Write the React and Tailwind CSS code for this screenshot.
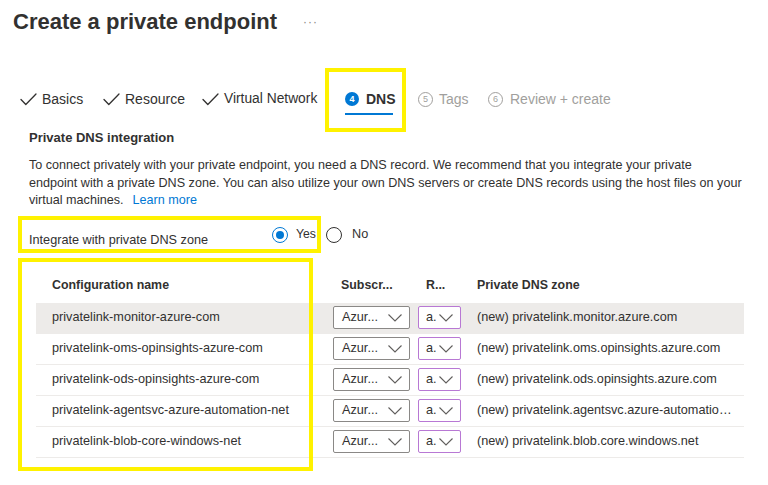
import React from "react";

const Check = () => (
  <svg width="17" height="13" viewBox="0 0 17 13" fill="none">
    <path d="M1 6.5 L5.8 11.5 L16 1" stroke="#323130" strokeWidth="1.3" strokeLinecap="round" strokeLinejoin="round" />
  </svg>
);

const Chevron = () => (
  <svg width="14" height="8" viewBox="0 0 14 8" fill="none">
    <path d="M0.5 0.5 L7 7 L13.5 0.5" stroke="#605e5c" strokeWidth="1.1" />
  </svg>
);

const rows = [
  ["privatelink-monitor-azure-com", "(new) privatelink.monitor.azure.com"],
  ["privatelink-oms-opinsights-azure-com", "(new) privatelink.oms.opinsights.azure.com"],
  ["privatelink-ods-opinsights-azure-com", "(new) privatelink.ods.opinsights.azure.com"],
  ["privatelink-agentsvc-azure-automation-net", "(new) privatelink.agentsvc.azure-automation.net"],
  ["privatelink-blob-core-windows-net", "(new) privatelink.blob.core.windows.net"],
];

export default function App() {
  return (
    <div className="relative w-[768px] h-[485px] bg-white overflow-hidden text-[#323130] font-['Liberation_Sans',Arial,sans-serif]">
      {/* Title */}
      <div className="flex items-center pl-[13px] pt-[7px] h-[37px]">
        <h1 className="text-[22px] font-semibold leading-[30px] text-[#323130]">Create a private endpoint</h1>
        <span className="ml-[26px] text-[12px] leading-none text-[#8a8886] tracking-[1px]">···</span>
      </div>

      {/* Tabs */}
      <div className="flex items-start mt-[52px] pl-[20px] text-[14px] leading-[20px]">
        <div className="w-[83px] flex items-center gap-[5px] h-[20px]">
          <Check />
          <span>Basics</span>
        </div>
        <div className="w-[99px] flex items-center gap-[5px] h-[20px]">
          <Check />
          <span>Resource</span>
        </div>
        <div className="w-[143px] flex items-center gap-[5px] h-[20px]">
          <Check />
          <span className="text-[13.8px]">Virtual Network</span>
        </div>
        <div className="w-[73px] flex flex-col">
          <div className="flex items-center gap-[7px] h-[20px]">
            <span className="w-[14px] h-[14px] rounded-full bg-[#0078d4] text-white text-[9px] font-bold flex items-center justify-center leading-none">4</span>
            <span className="font-semibold text-[14px]">DNS</span>
          </div>
          <div className="mt-[4px] h-[2px] w-[48px] bg-[#0078d4]" />
        </div>
        <div className="w-[70px] flex items-center gap-[6px] h-[20px] text-[#a19f9d]">
          <span className="w-[15px] h-[15px] rounded-full border border-[#a19f9d] text-[9px] flex items-center justify-center leading-none">5</span>
          <span>Tags</span>
        </div>
        <div className="flex items-center gap-[7px] h-[20px] text-[#a19f9d]">
          <span className="w-[15px] h-[15px] rounded-full border border-[#a19f9d] text-[9px] flex items-center justify-center leading-none">6</span>
          <span>Review + create</span>
        </div>
      </div>

      {/* Section heading */}
      <div className="pl-[29px] mt-[14px] text-[13px] font-semibold leading-[18px]">Private DNS integration</div>

      <p className="pl-[29px] mt-[10px] text-[12.6px] leading-[17.5px] text-[#323130]">
        To connect privately with your private endpoint, you need a DNS record. We recommend that you integrate your private
        <br />
        endpoint with a private DNS zone. You can also utilize your own DNS servers or create DNS records using the host files on your
        <br />
        virtual machines.
        <span className="ml-[9px] text-[#0078d4]">Learn more</span>
      </p>

      {/* Integrate row */}
      <div className="flex items-start mt-[15px] text-[12.7px]">
        <div className="w-[272px] pl-[29px] pt-[5px] leading-[20px]">Integrate with private DNS zone</div>
        <div className="flex items-center h-[20px]">
          <span className="w-[16px] h-[16px] rounded-full border border-[#0078d4] flex items-center justify-center">
            <span className="w-[8px] h-[8px] rounded-full bg-[#0078d4]" />
          </span>
          <span className="ml-[8px] w-[21px] text-[12.2px]">Yes</span>
          <span className="ml-[9px] w-[16px] h-[16px] rounded-full border border-[#323130]" />
          <span className="ml-[10px]">No</span>
        </div>
      </div>

      {/* Table */}
      <div className="ml-[36px] w-[708px] mt-[18px] text-[12.7px]">
        <div className="flex items-center h-[35px] font-semibold text-[12.4px]">
          <div className="w-[297px] pl-[16px]">Configuration name</div>
          <div className="w-[85px] pl-[8px]">Subscr...</div>
          <div className="w-[59px] pl-[8px]">R...</div>
          <div className="flex-1">Private DNS zone</div>
        </div>
        {rows.map(([name, zone], i) => (
          <div
            key={name}
            className={`flex items-center h-[31px] border-b border-[#edebe9] ${i === 0 ? "bg-[#edebe9]" : ""}`}
          >
            <div className="w-[297px] pl-[16px] truncate">{name}</div>
            <div className="w-[85px]">
              <div className="w-[77px] h-[23px] bg-white border border-[#8a8886] rounded-[2px] flex items-center justify-between pl-[8px] pr-[7px]">
                <span>Azur...</span>
                <Chevron />
              </div>
            </div>
            <div className="w-[59px]">
              <div className="w-[43px] h-[23px] bg-white border border-[#b878d4] rounded-[2px] flex items-center justify-between pl-[7px] pr-[7px]">
                <span>a.</span>
                <Chevron />
              </div>
            </div>
            <div className="flex-1 min-w-0 pr-[10px] truncate">{zone}</div>
          </div>
        ))}
      </div>

      {/* Yellow annotation boxes */}
      <div className="absolute left-[325px] top-[68px] w-[81px] h-[64px] border-[4px] border-[#fff200] pointer-events-none" />
      <div className="absolute left-[18px] top-[216px] w-[303px] h-[37px] border-[4px] border-[#fff200] pointer-events-none" />
      <div className="absolute left-[18px] top-[258px] w-[295px] h-[213px] border-[4px] border-[#fff200] pointer-events-none" />
    </div>
  );
}
